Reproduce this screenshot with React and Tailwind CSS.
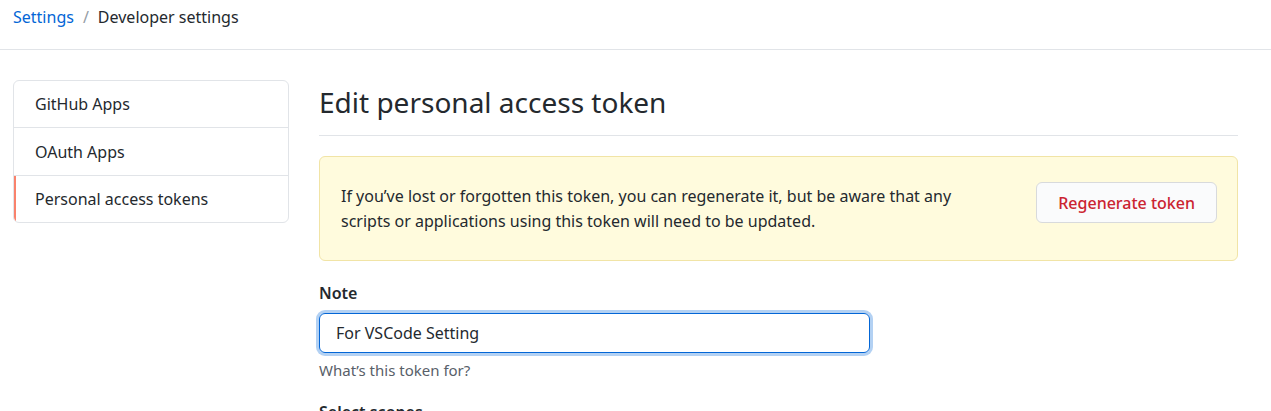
export default function App() {
  return (
    <div
      className="bg-white text-[#24292e] h-[411px] overflow-hidden"
      style={{ fontFamily: '"Segoe UI", "Noto Sans", sans-serif' }}
    >
      {/* breadcrumb */}
      <div className="h-[50px] border-b border-[#e1e4e8] px-[13px] pt-[5px] text-[16px] flex items-start">
        <a className="text-[#0366d6]">Settings</a>
        <span className="mx-[9px] text-[#959da5]">/</span>
        <span>Developer settings</span>
      </div>

      <div className="flex pt-[30px] pl-[13px] pr-[33px] gap-[30px]">
        {/* sidebar */}
        <nav className="w-[276px] shrink-0 border border-[#e1e4e8] rounded-[6px] text-[16px] self-start overflow-hidden">
          <div className="h-[47px] flex items-center pl-[21px] border-b border-[#e1e4e8]">GitHub Apps</div>
          <div className="h-[48px] flex items-center pl-[21px] border-b border-[#e1e4e8]">OAuth Apps</div>
          <div className="h-[46px] flex items-center pl-[19px] border-l-[2px] border-[#f9826c]">
            Personal access tokens
          </div>
        </nav>

        {/* main */}
        <main className="flex-1">
          <div className="border-b border-[#e1e4e8] pb-[11px] mb-[20px]">
            <h1 className="text-[28px] font-normal leading-[43px] pt-[1px]">Edit personal access token</h1>
          </div>

          <div className="bg-[#fffbdd] border border-[#f1e4a6] rounded-[6px] h-[105px] flex items-start justify-between pt-[27px] pl-[21px] pr-[20px]">
            <p className="text-[16px] leading-[25px] w-[660px]">
              If you’ve lost or forgotten this token, you can regenerate it, but be aware that any scripts or
              applications using this token will need to be updated.
            </p>
            <button className="h-[41px] -mt-[2px] px-[21px] bg-[#fafbfc] border border-[#d8dadc] rounded-[6px] text-[#cb2431] text-[16px] font-medium">
              Regenerate token
            </button>
          </div>

          <div className="mt-[18px]">
            <label className="block text-[16px] font-semibold leading-[28px]">Note</label>
            <div className="mt-[6px] w-[551px] h-[40px] rounded-[6px] border border-[#0366d6] shadow-[0_0_0_3px_rgba(3,102,214,0.3)] flex items-center px-[16px] text-[16px]">
              For VSCode Setting
            </div>
            <p className="text-[15px] text-[#586069] mt-[7px] leading-[20px]">What’s this token for?</p>
            <p className="text-[16px] font-semibold mt-[20px]">Select scopes</p>
          </div>
        </main>
      </div>
    </div>
  );
}
